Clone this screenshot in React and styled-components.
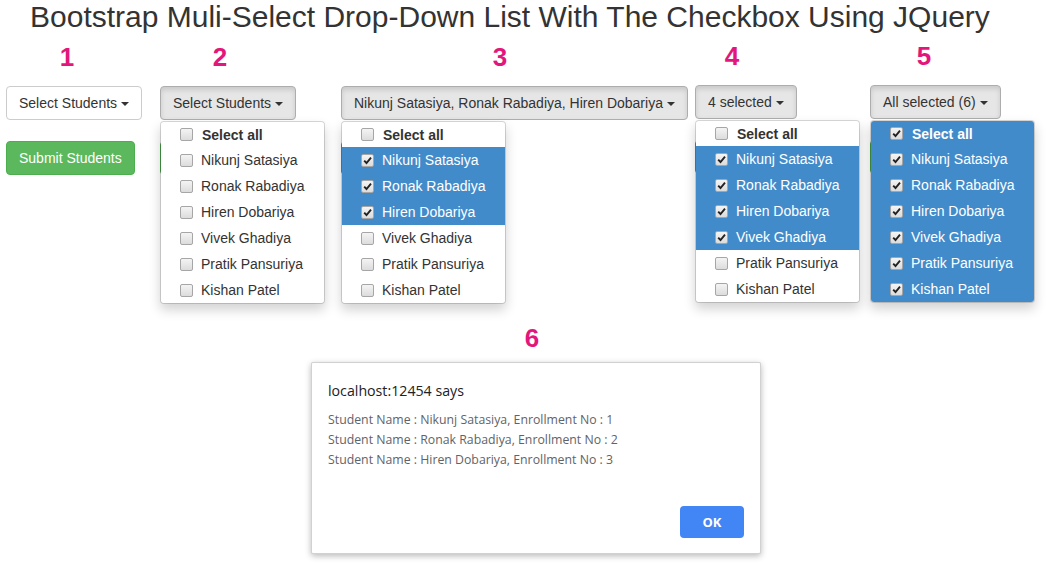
import React from 'react';
import styled, { createGlobalStyle } from 'styled-components';

const Global = createGlobalStyle`
  html, body { margin: 0; padding: 0; background: #fff; }
  body { font-family: "Liberation Sans", Arial, sans-serif; font-size: 14px; color: #333; }
  * { box-sizing: border-box; }
`;

const Page = styled.div`
  width: 1047px;
  height: 567px;
  overflow: hidden;
`;

const Title = styled.h1`
  margin: 0;
  padding: 0 0 0 30px;
  font-size: 30px;
  line-height: 34px;
  font-weight: 400;
  color: #333;
  white-space: nowrap;
`;

const Row = styled.div`
  display: flex;
  align-items: flex-start;
  padding-left: 6px;
  margin-top: 8px;
`;

const Column = styled.div`
  flex: 0 0 ${p => p.$w}px;
  display: flex;
  flex-direction: column;
  align-items: flex-start;
  margin-top: ${p => p.$dy || 0}px;
`;

const Num = styled.div`
  width: 24px;
  margin-left: ${p => p.$c - 12}px;
  text-align: center;
  font-family: "Liberation Sans", Arial, sans-serif;
  font-size: 26px;
  font-weight: 700;
  line-height: 30px;
  color: #e3177b;
`;

const Group = styled.div`
  position: relative;
  margin-top: 14px;
`;

const SelectButton = styled.button`
  display: inline-block;
  font-family: "Liberation Sans", Arial, sans-serif;
  font-size: 14px;
  line-height: 20px;
  padding: 6px 12px;
  height: 34px;
  border-radius: 4px;
  color: #333;
  white-space: nowrap;
  cursor: pointer;
  background: ${p => (p.$active ? '#e6e6e6' : '#fff')};
  border: 1px solid ${p => (p.$active ? '#adadad' : '#ccc')};
  box-shadow: ${p => (p.$active ? 'inset 0 3px 5px rgba(0,0,0,.125)' : 'none')};
`;

const Caret = styled.span`
  display: inline-block;
  width: 0;
  height: 0;
  margin-left: 4px;
  vertical-align: middle;
  border-top: 4px solid #333;
  border-left: 4px solid transparent;
  border-right: 4px solid transparent;
`;

const Submit = styled.button`
  margin-top: 21px;
  font-family: "Liberation Sans", Arial, sans-serif;
  font-size: 14px;
  line-height: 20px;
  padding: 6px 12px;
  height: 34px;
  border-radius: 4px;
  color: #fff;
  background: #5cb85c;
  border: 1px solid #4cae4c;
  white-space: nowrap;
`;

const Menu = styled.ul`
  position: absolute;
  top: calc(100% + 1px);
  left: 0;
  z-index: 5;
  width: 165px;
  margin: 0;
  padding: 0;
  list-style: none;
  background: #fff;
  background-clip: padding-box;
  border: 1px solid rgba(0, 0, 0, 0.15);
  border-radius: 4px;
  box-shadow: 0 6px 12px rgba(0, 0, 0, 0.175);
  overflow: hidden;
`;

const Item = styled.li`
  display: flex;
  align-items: center;
  height: 26px;
  padding-left: 19px;
  font-size: 14px;
  font-weight: ${p => (p.$bold ? 700 : 400)};
  color: ${p => (p.$on ? '#fff' : '#333')};
  background: ${p => (p.$on ? '#428bca' : 'transparent')};
  white-space: nowrap;
  &:first-child { height: 25px; }
`;

const Box = styled.span`
  flex: 0 0 13px;
  width: 13px;
  height: 13px;
  margin-right: ${p => (p.$bold ? 9 : 8)}px;
  border: 1px solid #a6a6a6;
  border-radius: 2px;
  background: linear-gradient(#f4f4f4, #dcdcdc);
  display: flex;
  align-items: center;
  justify-content: center;
`;

const DialogArea = styled.div`
  margin-top: 148px;
  display: flex;
  flex-direction: column;
  align-items: flex-start;
`;

const Dialog = styled.div`
  margin: 9px 0 0 311px;
  width: 450px;
  height: 192px;
  padding: 18px 16px 15px 16px;
  background: #fff;
  border: 1px solid rgba(0, 0, 0, 0.18);
  border-radius: 2px;
  box-shadow: 0 2px 6px rgba(0, 0, 0, 0.28);
  display: flex;
  flex-direction: column;
  font-family: "Open Sans", "Noto Sans", sans-serif;
`;

const DialogTitle = styled.div`
  font-size: 14.2px;
  line-height: 20px;
  color: #202124;
`;

const DialogBody = styled.div`
  margin-top: 9px;
  font-size: 12.3px;
  line-height: 20px;
  color: #5f6368;
`;

const Footer = styled.div`
  margin-top: auto;
  display: flex;
  justify-content: flex-end;
`;

const OkButton = styled.button`
  width: 64px;
  height: 32px;
  border: none;
  border-radius: 4px;
  background: #4285f4;
  color: #fff;
  font-family: "Open Sans", "Noto Sans", sans-serif;
  font-weight: 700;
  font-size: 13px;
`;

const Check = () => (
  <svg width="9" height="9" viewBox="0 0 9 9">
    <path d="M1.2 4.6 L3.5 7 L8 1.6" fill="none" stroke="#222" strokeWidth="1.9" />
  </svg>
);

const students = [
  'Nikunj Satasiya',
  'Ronak Rabadiya',
  'Hiren Dobariya',
  'Vivek Ghadiya',
  'Pratik Pansuriya',
  'Kishan Patel',
];

const DropMenu = ({ count }) => {
  const all = count === students.length;
  return (
    <Menu>
      <Item $bold $on={all}>
        <Box $bold>{all && <Check />}</Box>
        Select all
      </Item>
      {students.map((s, i) => (
        <Item key={s} $on={i < count}>
          <Box>{i < count && <Check />}</Box>
          {s}
        </Item>
      ))}
    </Menu>
  );
};

const columns = [
  { n: 1, w: 154, c: 61, label: 'Select Students', active: false, menu: null },
  { n: 2, w: 181, c: 60, label: 'Select Students', active: true, menu: 0 },
  { n: 3, w: 354, c: 159, label: 'Nikunj Satasiya, Ronak Rabadiya, Hiren Dobariya', active: true, menu: 3 },
  { n: 4, w: 175, c: 37, label: '4 selected', active: true, menu: 4, dy: -1 },
  { n: 5, w: 170, c: 54, label: 'All selected (6)', active: true, menu: 6, dy: -1 },
];

export default function App() {
  return (
    <Page>
      <Global />
      <Title>Bootstrap Muli-Select Drop-Down List With The Checkbox Using JQuery</Title>
      <Row>
        {columns.map(col => (
          <Column key={col.n} $w={col.w} $dy={col.dy}>
            <Num $c={col.c}>{col.n}</Num>
            <Group>
              <SelectButton $active={col.active}>
                {col.label}
                <Caret />
              </SelectButton>
              {col.menu !== null && <DropMenu count={col.menu} />}
            </Group>
            <Submit>Submit Students</Submit>
          </Column>
        ))}
      </Row>
      <DialogArea>
        <Num $c={532}>6</Num>
        <Dialog>
          <DialogTitle>localhost:12454 says</DialogTitle>
          <DialogBody>
            <div>Student Name : Nikunj Satasiya, Enrollment No : 1</div>
            <div>Student Name : Ronak Rabadiya, Enrollment No : 2</div>
            <div>Student Name : Hiren Dobariya, Enrollment No : 3</div>
          </DialogBody>
          <Footer>
            <OkButton>OK</OkButton>
          </Footer>
        </Dialog>
      </DialogArea>
    </Page>
  );
}
